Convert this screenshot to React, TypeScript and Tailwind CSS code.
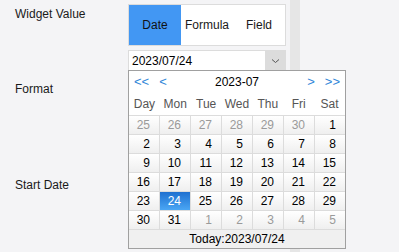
const font = "font-['Liberation_Sans',Arial,sans-serif]";

const weeks: { d: number; other?: boolean }[][] = [
  [{ d: 25, other: true }, { d: 26, other: true }, { d: 27, other: true }, { d: 28, other: true }, { d: 29, other: true }, { d: 30, other: true }, { d: 1 }],
  [{ d: 2 }, { d: 3 }, { d: 4 }, { d: 5 }, { d: 6 }, { d: 7 }, { d: 8 }],
  [{ d: 9 }, { d: 10 }, { d: 11 }, { d: 12 }, { d: 13 }, { d: 14 }, { d: 15 }],
  [{ d: 16 }, { d: 17 }, { d: 18 }, { d: 19 }, { d: 20 }, { d: 21 }, { d: 22 }],
  [{ d: 23 }, { d: 24 }, { d: 25 }, { d: 26 }, { d: 27 }, { d: 28 }, { d: 29 }],
  [{ d: 30 }, { d: 31 }, { d: 1, other: true }, { d: 2, other: true }, { d: 3, other: true }, { d: 4, other: true }, { d: 5, other: true }],
];

const dayNames = ["Day", "Mon", "Tue", "Wed", "Thu", "Fri", "Sat"];

export default function App() {
  return (
    <div className={`relative flex h-[252px] w-full bg-[#f4f4f6] text-[12px] text-[#1a1a1a] ${font}`}>
      <div className="flex w-[290px] flex-col pt-[4px]">
        <div className="flex">
          <div className="w-[128px] pl-[15px] pt-[2px] leading-[16px]">Widget Value</div>
          <div className="w-[158px]">
            <div className="flex h-[42px] border border-[#dcdcdc] bg-white">
              <div className="flex w-[52px] items-center justify-center bg-[#4297f3] text-[#111]">Date</div>
              <div className="flex w-[52px] items-center justify-center">Formula</div>
              <div className="flex w-[52px] items-center justify-center">Field</div>
            </div>
            <div className="mt-[4px] flex h-[21px] border border-[#dcdcdc] bg-white">
              <div className="flex flex-1 items-center pl-[3px] text-black">2023/07/24</div>
              <div className="flex w-[20px] items-center justify-center bg-[#dcdcdc]">
                <svg width="9" height="6" viewBox="0 0 9 6">
                  <path d="M1 1.5 L4.5 4.5 L8 1.5" fill="none" stroke="#555" strokeWidth="1" />
                </svg>
              </div>
            </div>
          </div>
        </div>
        <div className="mt-[8px] flex h-[20px] items-center">
          <div className="w-[128px] pl-[15px]">Format</div>
          <div className="h-[20px] w-[158px] border border-[#dcdcdc] bg-white" />
        </div>
        <div className="mt-[76px] flex h-[20px] items-center">
          <div className="w-[128px] pl-[15px]">Start Date</div>
          <div className="h-[20px] w-[158px] border border-[#dcdcdc] bg-white" />
        </div>
      </div>
      <div className="h-full w-[10px] bg-[#e6e6e6]" />
      <div className="flex-1" />

      <div className="absolute left-[128px] top-[70px] w-[218px] border border-[#a0a0a0] bg-white">
        <div className="relative flex h-[22px] items-center px-[5px]">
          <span className="text-[13px] text-[#2f86d8]">&lt;&lt;</span>
          <span className="ml-[10px] text-[13px] text-[#2f86d8]">&lt;</span>
          <span className="flex-1 text-center text-black">2023-07</span>
          <span className="text-[13px] text-[#2f86d8]">&gt;</span>
          <span className="ml-[10px] text-[13px] text-[#2f86d8]">&gt;&gt;</span>
        </div>
        <div className="grid h-[22px] grid-cols-7 items-center">
          {dayNames.map((n) => (
            <div key={n} className="text-center text-[#555]">{n}</div>
          ))}
        </div>
        <div className="grid grid-cols-7 gap-px border-t border-[#dcdcdc] bg-[#dcdcdc]">
          {weeks.flat().map((c, i) => {
            const selected = !c.other && c.d === 24;
            return (
              <div
                key={i}
                className={
                  selected
                    ? "flex h-[18px] items-center justify-end bg-gradient-to-b from-[#1e70d0] to-[#4aa6f4] pr-[9px] text-white"
                    : `flex h-[18px] items-center justify-end bg-gradient-to-b from-white to-[#efefef] pr-[9px] ${c.other ? "text-[#9a9a9a]" : "text-black"}`
                }
              >
                {c.d}
              </div>
            );
          })}
        </div>
        <div className="flex h-[19px] items-center justify-center border-t border-[#dcdcdc] bg-[#f0f0f0] text-black">
          Today:2023/07/24
        </div>
      </div>
    </div>
  );
}
